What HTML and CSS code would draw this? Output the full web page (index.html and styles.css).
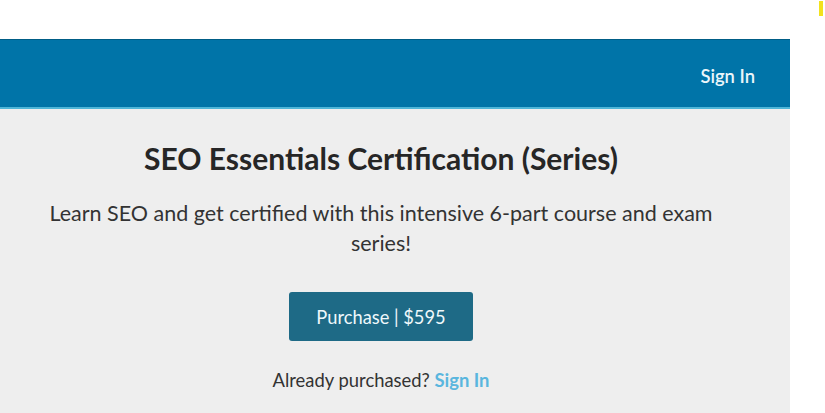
FILE: index.html
```html
<!DOCTYPE html>
<html>
<head>
<meta charset="utf-8">
<link rel="stylesheet" href="styles.css">
</head>
<body>
<span class="marker"></span>
<div class="page">
  <header class="topbar">
    <a class="topbar-link" href="#">Sign In</a>
  </header>
  <main class="hero">
    <h1 class="hero-title">SEO Essentials Certification (Series)</h1>
    <p class="hero-desc">Learn SEO and get certified with this intensive 6-part course and exam series!</p>
    <a class="btn-purchase" href="#">Purchase | $595</a>
    <p class="hero-note">Already purchased? <a class="note-link" href="#">Sign In</a></p>
  </main>
</div>
</body>
</html>
```
FILE: styles.css
```css
html, body {
  margin: 0;
  padding: 0;
  background: #ffffff;
  font-family: Lato, "Open Sans", sans-serif;
  height: 413px;
  overflow: hidden;
}
.marker {
  position: absolute;
  left: 819px;
  top: 1px;
  width: 4px;
  height: 15px;
  background: #f2e21e;
}
.page {
  width: 790px;
  padding-top: 39px;
}
.topbar {
  height: 67px;
  background: #0074a8;
  border-top: 1px solid #005d86;
  border-bottom: 2px solid #4fb6d8;
  display: flex;
  align-items: center;
  justify-content: flex-end;
  padding-right: 35px;
}
.topbar-link {
  color: #eaf6fb;
  text-decoration: none;
  font-size: 18.4px;
  font-weight: 600;
  margin-top: 4px;
}
.hero {
  background: #eeeeee;
  height: 304px;
  padding: 0 28px 0 0;
  display: flex;
  flex-direction: column;
  align-items: center;
  text-align: center;
}
.hero-title {
  margin: 31px 0 0;
  font-size: 30px;
  font-weight: 700;
  color: #262626;
  line-height: 36px;
}
.hero-desc {
  margin: 22px 0 0;
  width: 700px;
  font-size: 21.5px;
  line-height: 30px;
  color: #333333;
}
.btn-purchase {
  margin-top: 34px;
  width: 184px;
  height: 49px;
  box-sizing: border-box;
  display: flex;
  align-items: center;
  justify-content: center;
  background: #1e6a86;
  border-radius: 3px;
  color: #eef8fb;
  text-decoration: none;
  font-size: 18.3px;
}
.hero-note {
  margin: 28px 0 0;
  font-size: 18.4px;
  line-height: 22px;
  color: #333333;
}
.note-link {
  color: #5ab6de;
  text-decoration: none;
  font-weight: 700;
}
```
